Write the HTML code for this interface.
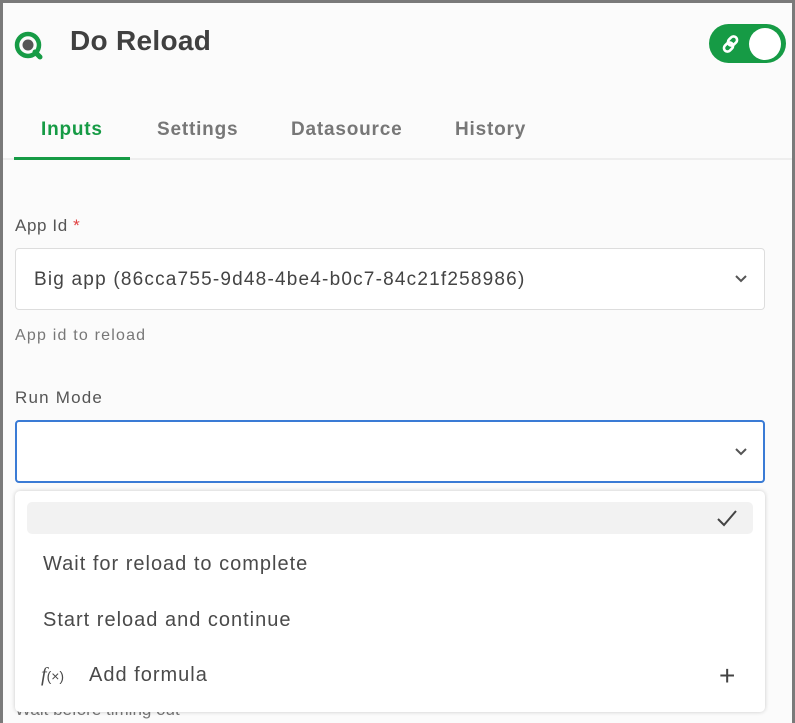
<!DOCTYPE html>
<html><head><style>
*{margin:0;padding:0;box-sizing:border-box}
body{width:795px;height:723px;overflow:hidden;background:#fff;font-family:"Liberation Sans",sans-serif;position:relative}
.frame{position:absolute;left:0;top:0;width:795px;height:723px;border:3px solid #7a7a7a;border-bottom:none;background:#fbfbfb}
.abs{position:absolute;white-space:nowrap}
.title{left:70px;top:25px;font-size:28px;color:#404040;font-weight:bold;letter-spacing:0.3px}
.tab{top:119px;font-size:19px;font-weight:bold;color:#777;letter-spacing:0.8px}
.lbl{font-size:17px;color:#555;left:15px;letter-spacing:0.6px}
.sel{left:15px;width:750px;height:62px;background:#fff;border:1px solid #ddd;border-radius:4px}
.item{left:43px;font-size:20px;color:#4a4a4a;letter-spacing:1px}
</style></head><body>
<div class="frame"></div>
<svg class="abs" style="left:13px;top:30px" width="32" height="32" viewBox="0 0 32 32"><circle cx="15" cy="15" r="11" fill="none" stroke="#169b45" stroke-width="4.5"/><circle cx="15" cy="15" r="5.5" fill="#555"/><path d="M22 22 L27 27" stroke="#169b45" stroke-width="5" stroke-linecap="round"/></svg>
<div class="abs title">Do Reload</div>
<div class="abs" style="left:709px;top:24px;width:77px;height:39px;border-radius:20px;background:#169b45"></div>
<div class="abs" style="left:749px;top:28px;width:32px;height:32px;border-radius:50%;background:#fff"></div>
<svg class="abs" style="left:720px;top:33px" width="22" height="22" viewBox="0 0 22 22"><g fill="none" stroke="#fff" stroke-width="2.6"><rect x="9" y="3" width="7" height="10" rx="3.5" transform="rotate(45 12.5 8)"/><rect x="5" y="9" width="7" height="10" rx="3.5" transform="rotate(45 8.5 14)"/></g></svg>
<div class="abs tab" style="left:41px;color:#169b45">Inputs</div>
<div class="abs tab" style="left:157px">Settings</div>
<div class="abs tab" style="left:291px">Datasource</div>
<div class="abs tab" style="left:455px">History</div>
<div class="abs" style="left:3px;top:158px;width:789px;height:2px;background:#eee"></div>
<div class="abs" style="left:14px;top:157px;width:116px;height:3px;background:#169b45"></div>
<div class="abs lbl" style="top:216px">App Id <span style="color:#e04040">*</span></div>
<div class="abs sel" style="top:248px"></div>
<div class="abs" style="left:34px;top:269px;font-size:19px;color:#444;letter-spacing:1.2px">Big app (86cca755-9d48-4be4-b0c7-84c21f258986)</div>
<svg class="abs" style="left:734px;top:274px" width="14" height="10" viewBox="0 0 14 10"><path d="M2 2 L7 7 L12 2" fill="none" stroke="#555" stroke-width="2"/></svg>
<div class="abs" style="left:15px;top:327px;font-size:16px;color:#777;letter-spacing:1.2px">App id to reload</div>
<div class="abs lbl" style="top:388px;letter-spacing:1.2px">Run Mode</div>
<div class="abs sel" style="top:420px;height:63px;border:2px solid #3a7bd5"></div>
<svg class="abs" style="left:734px;top:447px" width="14" height="10" viewBox="0 0 14 10"><path d="M2 2 L7 7 L12 2" fill="none" stroke="#555" stroke-width="2"/></svg>
<div class="abs" style="left:15px;top:700px;font-size:17px;color:#777">Wait before timing out</div>
<div class="abs" style="left:15px;top:491px;width:750px;height:221px;background:#fff;border-radius:5px;box-shadow:0 0 4px rgba(0,0,0,0.2)"></div>
<div class="abs" style="left:27px;top:502px;width:726px;height:32px;background:#f2f2f2;border-radius:5px"></div>
<svg class="abs" style="left:716px;top:508px" width="22" height="20" viewBox="0 0 22 20"><path d="M2 11 L8 17 L20 3" fill="none" stroke="#444" stroke-width="2"/></svg>
<div class="abs item" style="top:553px">Wait for reload to complete</div>
<div class="abs item" style="top:609px">Start reload and continue</div>
<div class="abs item" style="top:664px;left:41px;letter-spacing:0"><i style="font-family:'Liberation Serif',serif">f</i><span style="font-size:14px">(×)</span></div>
<div class="abs item" style="top:664px;left:89px">Add formula</div>
<div class="abs" style="left:719px;top:660px;font-size:28px;color:#444">+</div>
</body></html>
